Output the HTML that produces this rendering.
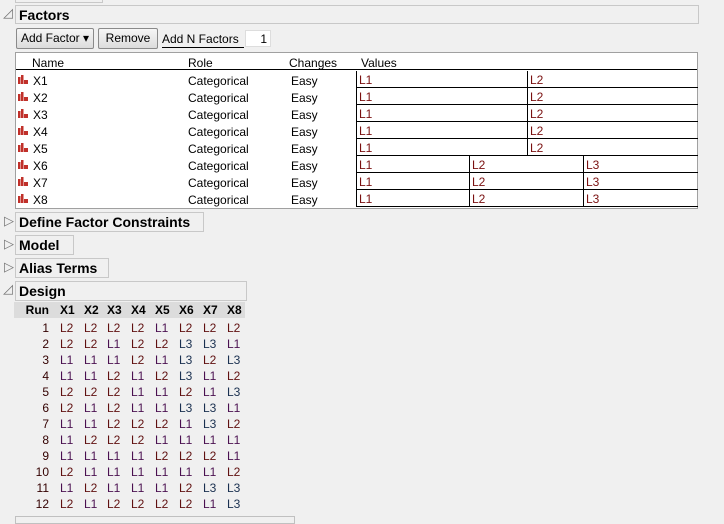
<!DOCTYPE html>
<html><head><meta charset="utf-8"><style>
body{margin:0;width:724px;height:519px;background:#f0f0f0;font-family:"Liberation Sans",sans-serif;font-size:12px;color:#000;position:relative;overflow:hidden}
.a{position:absolute;white-space:nowrap}
.hdr{position:absolute;border:1px solid #c8c8c8;background:#f0f0f0;font-weight:bold;font-size:14px;line-height:18px;padding-left:3px;box-sizing:border-box}
.tri{position:absolute;font-size:13px;color:#777}
.btn{position:absolute;border:1px solid #8a8a8a;border-radius:2px;background:linear-gradient(#f6f6f6,#dcdcdc);line-height:19px;text-align:center;box-sizing:border-box}
.vc{position:absolute;border-left:1px solid #000;border-bottom:1px solid #000;height:17px;box-sizing:border-box;color:#7a1010;padding-left:2px;line-height:18px}
.ic{position:absolute;width:10px;height:9px}
</style></head><body>
<div class="a" style="left:15px;top:-2px;width:86px;height:4px;border:1px solid #c8c8c8;border-top:none"></div>
<div class="tri" style="left:3px;top:5px">◿</div>
<div class="hdr" style="left:15px;top:5px;width:684px;height:19px">Factors</div>
<div class="btn" style="left:16px;top:28px;width:78px;height:21px">Add Factor ▾</div>
<div class="btn" style="left:98px;top:28px;width:60px;height:21px">Remove</div>
<div class="a" style="left:162px;top:31px;border-bottom:1px solid #000;width:82px;line-height:16px">Add N Factors</div>
<div class="a" style="left:245px;top:30px;width:26px;height:17px;background:#fff;border:1px solid #ddd;text-align:right;padding-right:3px;box-sizing:border-box;line-height:16px">1</div>
<div class="a" style="left:15px;top:52px;width:683px;height:157px;background:#fff;border:1px solid #a0a0a0;box-sizing:border-box"></div>
<div class="a" style="left:32px;top:56px">Name</div>
<div class="a" style="left:188px;top:56px">Role</div>
<div class="a" style="left:289px;top:56px">Changes</div>
<div class="a" style="left:361px;top:56px">Values</div>
<div class="a" style="left:16px;top:69px;width:681px;border-top:1px solid #000"></div>
<script>
var h='';var t=[2,2,2,2,2,3,3,3];
for(var i=0;i<8;i++){var y=72+i*17;
h+='<svg class="ic" style="left:18px;top:'+(y+3)+'px" viewBox="0 0 10 9"><rect x="0" y="2" width="2.5" height="7" fill="#c0302a"/><rect x="3" y="0" width="2.5" height="9" fill="#c0302a"/><rect x="6" y="5" width="4" height="4" fill="#c0302a"/></svg>';
h+='<div class="a" style="left:33px;top:'+(y+2)+'px">X'+(i+1)+'</div><div class="a" style="left:188px;top:'+(y+2)+'px">Categorical</div><div class="a" style="left:291px;top:'+(y+2)+'px">Easy</div>';
var b=t[i]==2?[356,527,698]:[356,469,583,698];
for(var k=0;k<b.length-1;k++)h+='<div class="vc" style="left:'+b[k]+'px;top:'+(y-1)+'px;width:'+(b[k+1]-b[k])+'px">L'+(k+1)+'</div>';}
document.write(h);
</script>
<div class="tri" style="left:4px;top:213px">▷</div>
<div class="hdr" style="left:15px;top:212px;width:189px;height:20px">Define Factor Constraints</div>
<div class="tri" style="left:4px;top:236px">▷</div>
<div class="hdr" style="left:15px;top:235px;width:59px;height:20px">Model</div>
<div class="tri" style="left:4px;top:259px">▷</div>
<div class="hdr" style="left:15px;top:258px;width:94px;height:20px">Alias Terms</div>
<div class="tri" style="left:3px;top:281px">◿</div>
<div class="hdr" style="left:15px;top:281px;width:232px;height:20px">Design</div>
<div class="a" style="left:14px;top:302px;width:231px;height:16px;background:#dcdcdc"></div>
<script>
var d=["L2 L2 L2 L2 L1 L2 L2 L2","L2 L2 L1 L2 L2 L3 L3 L1","L1 L1 L1 L2 L1 L3 L2 L3","L1 L1 L2 L1 L2 L3 L1 L2","L2 L2 L2 L1 L1 L2 L1 L3","L2 L1 L2 L1 L1 L3 L3 L1","L1 L1 L2 L2 L2 L1 L3 L2","L1 L2 L2 L2 L1 L1 L1 L1","L1 L1 L1 L1 L2 L2 L2 L1","L2 L1 L1 L1 L1 L1 L1 L2","L1 L2 L1 L1 L1 L2 L3 L3","L2 L1 L2 L2 L2 L2 L1 L3"];
var xs=[60,84,107,131,155,179,203,227];var h='';
h+='<div class="a" style="left:20px;top:303px;width:29px;text-align:right;font-weight:bold">Run</div>';
for(var j=0;j<8;j++)h+='<div class="a" style="left:'+xs[j]+'px;top:303px;font-weight:bold">X'+(j+1)+'</div>';
var col={L1:'#4a1050',L2:'#601010',L3:'#1a3050'};
for(var i=0;i<12;i++){var y=321+i*16;var v=d[i].split(' ');
h+='<div class="a" style="left:20px;top:'+y+'px;width:29px;text-align:right;color:#300">'+(i+1)+'</div>';
for(var j=0;j<8;j++)h+='<div class="a" style="left:'+xs[j]+'px;top:'+y+'px;color:'+col[v[j]]+'">'+v[j]+'</div>';}
document.write(h);
</script>
<div class="a" style="left:15px;top:516px;width:278px;height:6px;border:1px solid #c0c0c0"></div>
</body></html>
